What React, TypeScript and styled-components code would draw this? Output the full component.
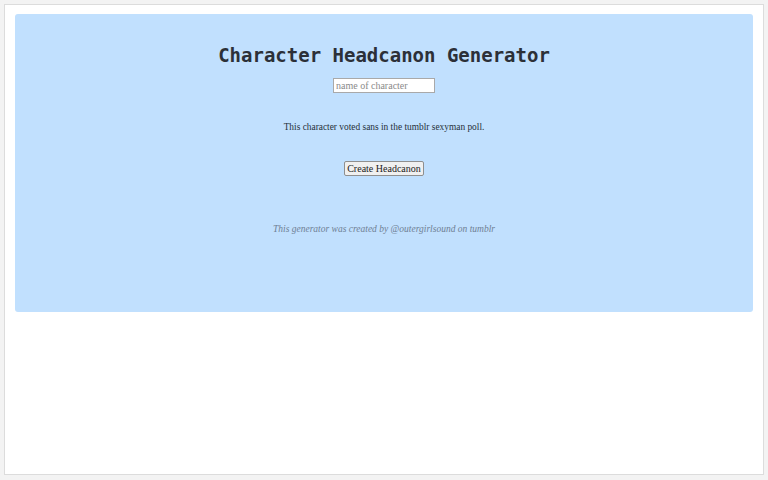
import styled, { createGlobalStyle } from 'styled-components';

const GlobalStyle = createGlobalStyle`
  html, body {
    margin: 0;
    padding: 0;
    background: #f3f3f3;
  }
  body {
    font-family: "Liberation Serif", "Times New Roman", serif;
  }
`;

const Frame = styled.div`
  box-sizing: border-box;
  margin: 4px 4px 0 4px;
  width: 760px;
  height: 471px;
  background: #ffffff;
  border: 1px solid #dcdcdc;
  padding: 9px 10px;
`;

const Panel = styled.div`
  box-sizing: border-box;
  height: 298px;
  background: #c1e0fe;
  border-radius: 3px;
  display: flex;
  flex-direction: column;
  align-items: center;
  padding-top: 30px;
`;

const Title = styled.h1`
  margin: 0;
  font-family: "DejaVu Sans Mono", "Liberation Mono", monospace;
  font-weight: bold;
  font-size: 19px;
  line-height: 22px;
  color: #2c3038;
`;

const NameInput = styled.input`
  box-sizing: border-box;
  margin-top: 12px;
  width: 102px;
  height: 15px;
  padding: 0 2px;
  font-family: "Liberation Serif", "Times New Roman", serif;
  font-size: 10px;
  background: #ffffff;
  border: 1px solid #a9a9a9;
  &::placeholder {
    color: #8a8a8a;
  }
`;

const Result = styled.p`
  margin: 28px 0 0 0;
  font-size: 9.4px;
  line-height: 12px;
  color: #27303a;
`;

const CreateButton = styled.button`
  box-sizing: border-box;
  margin-top: 28px;
  width: 80px;
  height: 15px;
  padding: 0;
  font-family: "Liberation Serif", "Times New Roman", serif;
  font-size: 10px;
  color: #222;
  background: #f0f0f0;
  border: 1px solid #8f8f8f;
  border-radius: 2px;
`;

const Credit = styled.p`
  margin: 47px 0 0 0;
  font-style: italic;
  font-size: 9.5px;
  line-height: 12px;
  color: #6f7f94;
`;

export default function App() {
  return (
    <>
      <GlobalStyle />
      <Frame>
        <Panel>
          <Title>Character Headcanon Generator</Title>
          <NameInput placeholder="name of character" />
          <Result>This character voted sans in the tumblr sexyman poll.</Result>
          <CreateButton>Create Headcanon</CreateButton>
          <Credit>This generator was created by @outergirlsound on tumblr</Credit>
        </Panel>
      </Frame>
    </>
  );
}
